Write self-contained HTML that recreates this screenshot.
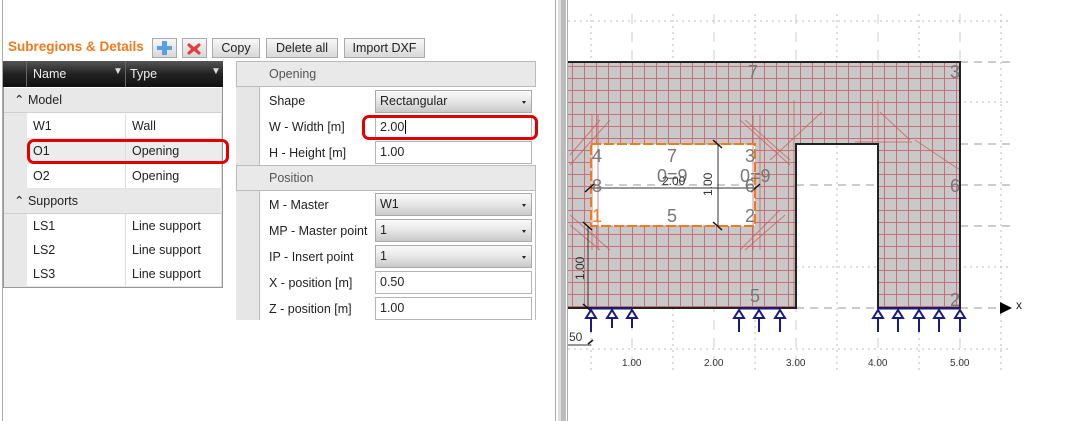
<!DOCTYPE html>
<html><head><meta charset="utf-8"><style>
*{box-sizing:border-box;margin:0;padding:0}
body{width:1076px;height:421px;background:#fff;position:relative;overflow:hidden;font-family:"Liberation Sans",sans-serif;font-size:12.5px;color:#222}
.a{position:absolute}
.btn{position:absolute;top:38px;height:20px;border:1px solid #aaa;background:linear-gradient(#f8f8f8,#d8d8d8);font-size:12.5px;text-align:center;line-height:18px;color:#222}
.cell{position:absolute;height:25px;line-height:25px;padding-left:6px;border-right:1px solid #ddd;border-bottom:1px solid #e4e4e4;background:#fff}
.grp{position:absolute;left:4px;width:218px;height:25px;line-height:24px;background:#e8e8e8;border-bottom:1px solid #d0d0d0;padding-left:10px}
.lbl{position:absolute;left:269px;font-size:12.5px}
.val{position:absolute;left:375px;width:157px;height:23px;border:1px solid #b5b5b5;background:#fff;padding-left:4px;line-height:21px}
.dd{background:linear-gradient(#fafafa,#e8e8e8 45%,#c9c9c9);border-color:#aaa}
.dd:after{content:"";position:absolute;right:5px;top:10px;border:2.5px solid transparent;border-top:3px solid #222}
</style></head><body>
<div class="a" style="left:2px;top:0;width:1px;height:421px;background:#aaa"></div>
<div class="a" style="left:555px;top:0;width:1px;height:421px;background:#aaa"></div>
<div class="a" style="left:558px;top:0;width:3px;height:421px;background:#ddd"></div>
<div class="a" style="left:561px;top:0;width:5px;height:421px;background:#bbb"></div>
<div class="a" style="left:567px;top:0;width:1px;height:421px;background:#aaa"></div>

<div class="a" style="left:8px;top:39px;font-weight:bold;font-size:13.5px;color:#f07a20">Subregions &amp; Details</div>
<div class="btn" style="left:152px;width:25px"><svg width="23" height="18"><path d="M9 4h5v5h5v4h-5v5h-5v-5h-5v-4h5z" transform="translate(0,-2)" fill="#5a9fe0"/></svg></div>
<div class="btn" style="left:182px;width:25px"><svg width="23" height="18"><path d="M6 4l5 4 5-4 2 2-4 4 4 4-2 2-5-4-5 4-2-2 4-4-4-4z" fill="#e04040"/></svg></div>
<div class="btn" style="left:212px;width:48px">Copy</div>
<div class="btn" style="left:266px;width:72px">Delete all</div>
<div class="btn" style="left:344px;width:81px">Import DXF</div>

<div class="a" style="left:3px;top:61px;width:220px;height:227px;border:1px solid #999;background:#fff"></div>
<div class="a" style="left:3px;top:61px;width:220px;height:26px;background:linear-gradient(#555,#222 50%,#111);"></div>
<div class="a" style="left:26px;top:61px;width:1px;height:26px;background:#666"></div>
<div class="a" style="left:125px;top:61px;width:1px;height:26px;background:#666"></div>
<div class="a" style="left:33px;top:67px;color:#eee">Name</div>
<div class="a" style="left:130px;top:67px;color:#eee">Type</div>
<div class="a" style="left:113px;top:66px;color:#ddd;font-size:10px">▼</div>
<div class="a" style="left:211px;top:66px;color:#ddd;font-size:10px">▼</div>
<div class="a" style="left:4px;top:88px;width:23px;height:199px;background:#e8e8e8"></div>
<div class="grp" style="top:88px">⌃ Model</div>
<div class="cell" style="left:27px;top:114px;width:99px">W1</div><div class="cell" style="left:126px;top:114px;width:96px">Wall</div>
<div class="cell" style="left:27px;top:139px;width:99px;background:#ececec">O1</div><div class="cell" style="left:126px;top:139px;width:96px;background:#ececec">Opening</div>
<div class="cell" style="left:27px;top:164px;width:99px">O2</div><div class="cell" style="left:126px;top:164px;width:96px">Opening</div>
<div class="grp" style="top:189px">⌃ Supports</div>
<div class="cell" style="left:27px;top:214px;width:99px">LS1</div><div class="cell" style="left:126px;top:214px;width:96px">Line support</div>
<div class="cell" style="left:27px;top:238px;width:99px">LS2</div><div class="cell" style="left:126px;top:238px;width:96px">Line support</div>
<div class="cell" style="left:27px;top:262px;width:99px">LS3</div><div class="cell" style="left:126px;top:262px;width:96px">Line support</div>
<div class="a" style="left:27px;top:139px;width:202px;height:25px;border:3px solid #e00000;border-radius:7px"></div>

<div class="a" style="left:236px;top:61px;width:300px;height:26px;background:#e9e9e9;border:1px solid #bbb"></div>
<div class="a" style="left:269px;top:67px;color:#555">Opening</div>
<div class="a" style="left:236px;top:87px;width:24px;height:78px;background:#e6e6e6;border-right:1px solid #bbb"></div>
<div class="lbl" style="top:94px">Shape</div><div class="val dd" style="top:90px">Rectangular</div>
<div class="lbl" style="top:120px">W - Width [m]</div><div class="val" style="top:116px">2.00<span style="border-left:1px solid #000;margin-left:1px"></span></div>
<div class="lbl" style="top:146px">H - Height [m]</div><div class="val" style="top:141px">1.00</div>
<div class="a" style="left:362px;top:115px;width:176px;height:25px;border:3px solid #e00000;border-radius:7px"></div>
<div class="a" style="left:236px;top:165px;width:300px;height:26px;background:#e9e9e9;border:1px solid #bbb"></div>
<div class="a" style="left:269px;top:171px;color:#555">Position</div>
<div class="a" style="left:236px;top:191px;width:24px;height:129px;background:#e6e6e6;border-right:1px solid #bbb"></div>
<div class="a" style="left:535px;top:191px;width:1px;height:129px;background:#bbb"></div>
<div class="lbl" style="top:198px">M - Master</div><div class="val dd" style="top:193px">W1</div>
<div class="lbl" style="top:224px">MP - Master point</div><div class="val dd" style="top:219px">1</div>
<div class="lbl" style="top:250px">IP - Insert point</div><div class="val dd" style="top:245px">1</div>
<div class="lbl" style="top:276px">X - position [m]</div><div class="val" style="top:271px">0.50</div>
<div class="lbl" style="top:302px">Z - position [m]</div><div class="val" style="top:297px">1.00</div>

<svg class="a" style="left:0;top:0" width="1076" height="421" font-family="Liberation Sans, sans-serif" shape-rendering="crispEdges">
<defs>
<pattern id="m" x="572" y="66" width="12" height="12" patternUnits="userSpaceOnUse">
<rect width="12" height="12" fill="#c9c9c9"/>
<rect x="0" y="0" width="1" height="12" fill="#c8707a"/><rect x="0" y="0" width="12" height="1" fill="#c8707a"/></pattern>
<clipPath id="c"><rect x="568" y="0" width="508" height="421"/></clipPath>
</defs>
<g clip-path="url(#c)">
<g stroke="#bbb" stroke-dasharray="2,4">
<path d="M568 21H1010M568 102H1010M568 267H1010M568 349H1010M591 14V370M673 14V370M755 14V370M837 14V370M919 14V370M1001 14V370"/>
</g>
<g stroke="#ccc" stroke-dasharray="10,8">
<path d="M632 14V370M714 14V370M796 14V370M878 14V370M960 14V370"/>
</g>
<path d="M560 62H960V308H878V144H796V308H560Z" fill="url(#m)"/>
<rect x="591" y="144" width="164" height="82" fill="#fff"/>
<g stroke="#c55" stroke-width="1" opacity="0.7" shape-rendering="auto">
<path d="M570 165L610 120M570 155L600 120M570 215L610 250M570 225L600 250M740 120L790 165M745 120L790 160M740 250L780 210M745 250L785 215M770 160L822 112M880 112L910 140M915 140L960 170M855 142H912M592 115V250M598 115V250M753 115V250M760 115V250M794 100V308M878 100V144"/>
</g>
<g stroke="#999" stroke-dasharray="8,6" fill="none">
<path d="M591 185H755M591 144H755M591 226H755M796 185H878M960 62H1010M960 144H1010M960 185H1010M960 226H1010M960 308H1010M796 308H878"/>
</g>
<path d="M560 62H960V308H878V144H796V308H560" fill="none" stroke="#222" stroke-width="2"/>
<rect x="591" y="144" width="164" height="82" fill="none" stroke="#f07a20" stroke-width="2" stroke-dasharray="10,3"/>
<path d="M591 188H755M718 144V226M588 226V308" stroke="#333"/>
<g stroke="#111" stroke-width="1.5" shape-rendering="auto"><path d="M713 140l9 8M713 222l9 8M585 192l9-8M751 192l9-8M583 222l9 8M583 304l9 8M588 344l5-4"/></g>
<path d="M568 345H591" stroke="#333"/>
<g fill="#777" font-size="18">
<text x="748" y="78">7</text><text x="950" y="78">3</text><text x="592" y="162">4</text><text x="667" y="162">7</text><text x="745" y="162">3</text>
<text x="592" y="192">8</text><text x="745" y="192">6</text><text x="950" y="192">6</text><text x="667" y="222">5</text><text x="745" y="222">2</text>
<text x="750" y="302">5</text><text x="950" y="306">2</text><text x="657" y="182">0=9</text><text x="740" y="182">0=9</text>
</g>
<text x="592" y="222" fill="#f07a20" font-size="18">1</text>
<text x="662" y="185" fill="#333" font-size="12">2.00</text>
<text transform="translate(712,196) rotate(-90)" fill="#333" font-size="12">1.00</text>
<text transform="translate(584,280) rotate(-90)" fill="#333" font-size="12">1.00</text>
<text x="569" y="341" fill="#333" font-size="12">50</text>
<g fill="#333" font-size="10"><text x="622" y="366">1.00</text><text x="704" y="366">2.00</text><text x="786" y="366">3.00</text><text x="868" y="366">4.00</text><text x="950" y="366">5.00</text></g>
<path d="M1000 302L1012 308L1000 314Z" fill="#000" shape-rendering="auto"/><text x="1016" y="309" font-size="12" fill="#222">x</text>
<path d="M591 308.5H632M739 308.5H780M878 308.5H960" stroke="#1a1a80" stroke-width="2"/>
<g stroke="#1a1a80" stroke-width="2" fill="#fff" shape-rendering="auto">
<path d="M591 310l-5 8h10z M591 318V332 M612 310l-5 8h10z M612 318V328 M632 310l-5 8h10z M632 318V328 M739 310l-5 8h10z M739 318V332 M759 310l-5 8h10z M759 318V332 M780 310l-5 8h10z M780 318V332 M878 310l-5 8h10z M878 318V332 M898 310l-5 8h10z M898 318V332 M919 310l-5 8h10z M919 318V332 M939 310l-5 8h10z M939 318V332 M960 310l-5 8h10z M960 318V332"/>
</g>
</g>
</svg>
</body></html>
